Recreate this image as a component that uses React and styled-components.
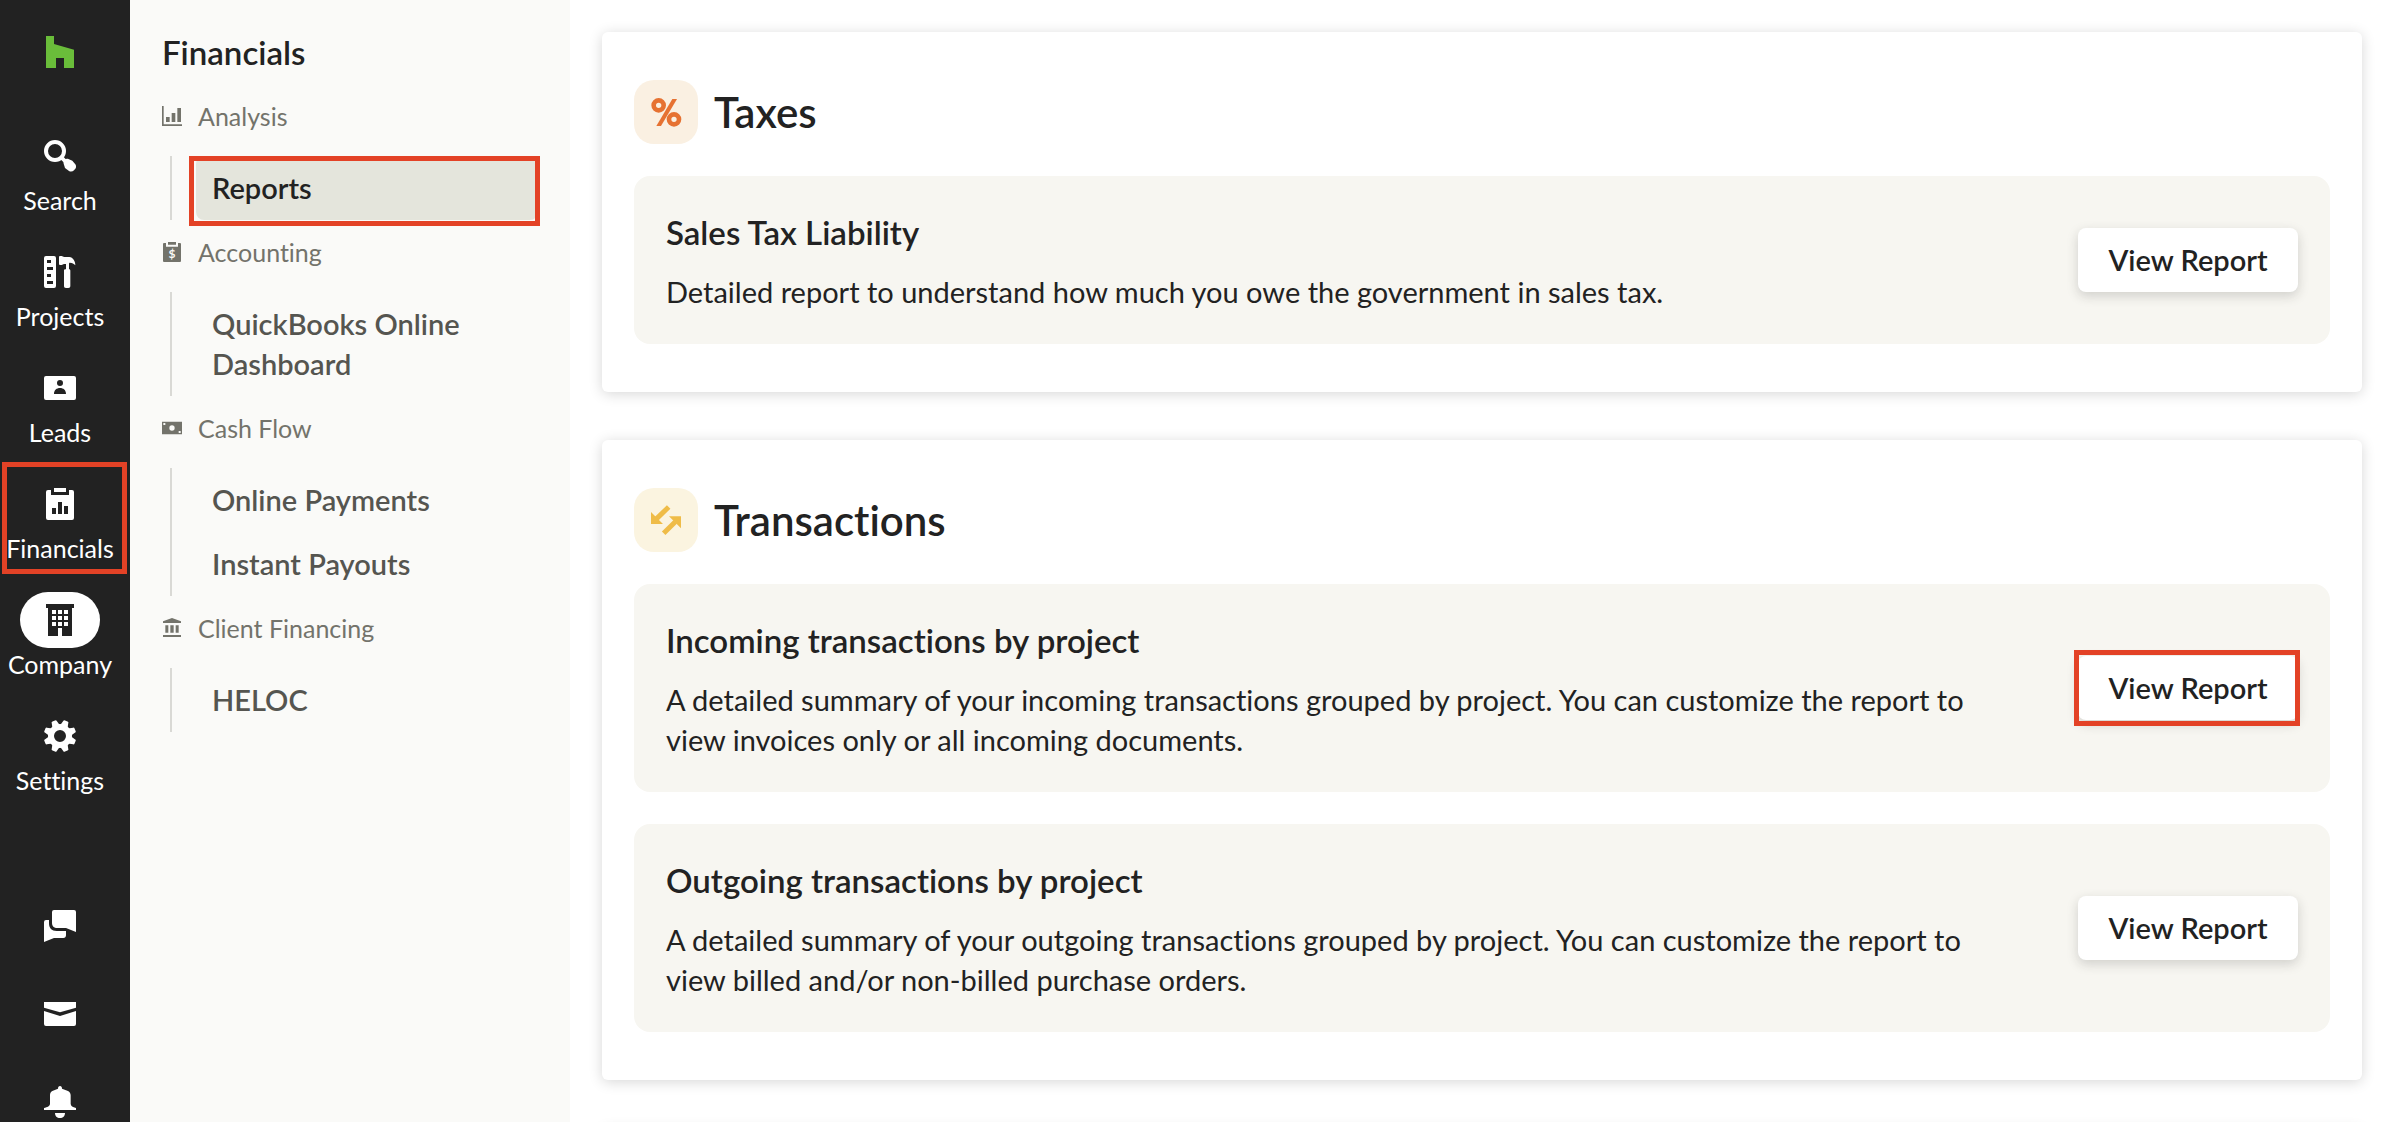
import React from "react";
import styled, { createGlobalStyle, css } from "styled-components";

const GlobalStyle = createGlobalStyle`
    * {
        box-sizing: border-box;
    }

    body {
        margin: 0;
        background: #fff;
        color: #222;
        font-family: "Lato", "Liberation Sans", sans-serif;
        font-variant-ligatures: none;
    }

    a {
        color: inherit;
        text-decoration: none;
    }
`;

const highlight = css`
    position: relative;

    &::after {
        content: "";
        position: absolute;
        border: 5px solid #e34226;
        pointer-events: none;
    }
`;

const Page = styled.div`
    display: flex;
    height: 100vh;
    overflow: hidden;
`;

const Rail = styled.nav`
    display: flex;
    flex-direction: column;
    align-items: center;
    flex: 0 0 130px;
    padding-right: 10px;
    background: #222;
    color: #fff;
    overflow: hidden;
`;

const Logo = styled.a`
    display: flex;
    padding: 36px 0 60px;
`;

const RailList = styled.div`
    display: flex;
    flex-direction: column;
    gap: 28px;
    width: 100%;
    margin-bottom: 86px;
`;

const RailItem = styled.a`
    display: flex;
    flex-direction: column;
    align-items: center;
    font-size: 25px;
    line-height: 32px;
    white-space: nowrap;

    ${(props) => props.$marked && css`
        ${highlight}

        &::after {
            inset: -14px -7px -10px 2px;
        }
    `}
`;

const Pill = styled.span`
    display: flex;
    align-items: center;
    justify-content: center;
    width: 80px;
    height: 56px;
    border-radius: 28px;
    background: ${(props) => (props.$active ? "#fff" : "transparent")};
    color: ${(props) => (props.$active ? "#222" : "#fff")};
`;

const RailAction = styled.button`
    display: flex;
    align-items: center;
    justify-content: center;
    flex: 0 0 88px;
    width: 88px;
    padding: 0;
    border: 0;
    background: none;
    color: #fff;
`;

const Panel = styled.aside`
    flex: 0 0 440px;
    padding: 28px 32px;
    background: #fafaf8;
`;

const PanelTitle = styled.h2`
    margin: 0 0 8px;
    font-size: 33px;
    font-weight: 600;
    line-height: 48px;
`;

const GroupTitle = styled.h3`
    display: flex;
    align-items: center;
    gap: 16px;
    margin: 0;
    padding: 16px 0 24px;
    color: #73736b;
    font-size: 25px;
    font-weight: 400;
    line-height: 32px;
`;

const GroupItems = styled.div`
    margin-left: 8px;
    padding-left: 24px;
    border-left: 2px solid #d9d9d5;
`;

const GroupLink = styled.a`
    display: block;
    padding: 12px 16px;
    border-radius: 8px;
    color: #555550;
    font-size: 29px;
    font-weight: 600;
    line-height: 40px;

    ${(props) => props.$active && css`
        background: #e4e5dc;
        color: #222;
        ${highlight}

        &::after {
            inset: 0 -2px -6px -7px;
        }
    `}
`;

const Main = styled.main`
    display: flex;
    flex-direction: column;
    flex: 1;
    gap: 48px;
    min-width: 0;
    padding: 32px 30px 32px 32px;
`;

const Card = styled.section`
    display: flex;
    flex-direction: column;
    flex-shrink: 0;
    gap: 32px;
    padding: 48px 32px;
    border-radius: 6px;
    background: #fff;
    box-shadow: 0 2px 14px rgba(0, 0, 0, 0.16);
`;

const CardHeader = styled.header`
    display: flex;
    align-items: center;
    gap: 16px;
`;

const Tile = styled.span`
    display: flex;
    width: 64px;
    height: 64px;
    border-radius: 20px;
    background: ${(props) => props.$background};
    color: ${(props) => props.$color};
`;

const CardTitle = styled.h1`
    margin: 0;
    font-size: 42px;
    font-weight: 600;
    line-height: 56px;
`;

const Report = styled.article`
    display: flex;
    align-items: center;
    justify-content: space-between;
    gap: 96px;
    padding: 32px;
    border-radius: 16px;
    background: #f7f6f1;
`;

const ReportTitle = styled.h2`
    margin: 0 0 16px;
    font-size: 33px;
    font-weight: 600;
    line-height: 48px;
`;

const ReportText = styled.p`
    margin: 0;
    font-size: 29px;
    line-height: 40px;
`;

const ButtonWrap = styled.div`
    flex: 0 0 220px;

    ${(props) => props.$marked && css`
        ${highlight}

        &::after {
            inset: -6px -2px -6px -4px;
        }
    `}
`;

const ReportButton = styled.button`
    display: block;
    width: 100%;
    height: 64px;
    padding: 0;
    border: 0;
    border-radius: 8px;
    background: #fff;
    box-shadow: 0 4px 12px rgba(34, 34, 34, 0.18);
    color: #222;
    font-family: inherit;
    font-size: 29px;
    font-weight: 600;
    line-height: 40px;
`;

const Icon = ({ size = 32, box = 96, children }) => (
    <svg width={size} height={size} viewBox={`0 0 ${box} ${box}`} fill="currentColor" aria-hidden="true">
        {children}
    </svg>
);

const SearchIcon = () => (
    <Icon>
        <circle cx="33" cy="33" r="27" fill="none" stroke="currentColor" strokeWidth="12" />
        <path d="M52 52l12 12" stroke="currentColor" strokeWidth="11" />
        <path d="M62 59c4-3 8-3 13-1l10 4 9 11c3 5 3 9 0 13l-4 5c-4 4-10 5-15 2l-12-9-4-13c-1-5 0-9 3-12z" />
    </Icon>
);

const ProjectsIcon = () => (
    <Icon>
        <path fillRule="evenodd" d="M6 0h24a6 6 0 0 1 6 6v84a6 6 0 0 1-6 6H6a6 6 0 0 1-6-6V6a6 6 0 0 1 6-6zM9 12v9h12v-9zM9 33v9h18v-9zM9 54v9h12v-9zM9 75v9h18v-9z" />
        <path d="M48 0h5c3 0 4 3 8 3h15c11 1 18 12 18 25-5-5-9-8-16-8-3 0-3 2-3 5v15h1c2 0 3 2 3 4v46c0 4-2 6-6 6h-7c-4 0-6-2-6-6V44c0-2 1-4 4-4h2V24h-6c-3 0-4 3-7 3h-5c-2 0-3-1-3-3V3c0-2 1-3 3-3z" />
    </Icon>
);

const LeadsIcon = () => (
    <Icon>
        <path fillRule="evenodd" d="M6 12h84a6 6 0 0 1 6 6v60a6 6 0 0 1-6 6H6a6 6 0 0 1-6-6V18a6 6 0 0 1 6-6zM48 24a9 9 0 1 0 0 18a9 9 0 1 0 0-18zM30 66h36c0-12-8-18-18-18s-18 6-18 18z" />
    </Icon>
);

const FinancialsIcon = () => (
    <Icon>
        <path d="M30 0h36v12H30z" />
        <path fillRule="evenodd" d="M12 6h9v15h54V6h9a6 6 0 0 1 6 6v78a6 6 0 0 1-6 6H12a6 6 0 0 1-6-6V12a6 6 0 0 1 6-6zM24 60v18h12V60zM42 42v36h12V42zM60 54v24h12V54z" />
    </Icon>
);

const CompanyIcon = () => (
    <Icon>
        <path fillRule="evenodd" d="M6 0h84v12h-6v84H54V72H42v24H12V12H6zM24 18v12h12V18zM42 18v12h12V18zM60 18v12h12V18zM24 36v12h12V36zM42 36v12h12V36zM60 36v12h12V36zM24 54v12h12V54zM42 54v12h12V54zM60 54v12h12V54z" />
    </Icon>
);

const SettingsIcon = () => (
    <Icon>
        <circle cx="48" cy="48" r="27" fill="none" stroke="currentColor" strokeWidth="18" />
        {[0, 1, 2, 3, 4, 5, 6, 7].map((tooth) => (
            <path key={tooth} d="M36 18l4-16q0-3 4-3h8q4 0 4 3l4 16z" transform={`rotate(${22.5 + tooth * 45} 48 48)`} />
        ))}
    </Icon>
);

const ChatIcon = () => (
    <Icon>
        <path d="M30 0h60a6 6 0 0 1 6 6v60L66 54H40c-10 0-16-6-16-16V6a6 6 0 0 1 6-6z" />
        <path d="M6 30h9v10c0 15 8 23 23 23h28v13c0 5-3 8-8 8H30L0 96V36a6 6 0 0 1 6-6z" />
    </Icon>
);

const MailIcon = () => (
    <Icon>
        <path d="M0 12h96v17L48 43 0 29z" />
        <path d="M0 39l48 15 48-15v39a6 6 0 0 1-6 6H6a6 6 0 0 1-6-6z" />
    </Icon>
);

const BellIcon = () => (
    <Icon>
        <path d="M48 0c4 0 6 3 6 8l18 7c5 3 8 7 8 13v25c0 7 6 10 16 13v6H0v-6c10-3 18-6 18-13V28c0-6 2-10 7-13l17-7c0-5 2-8 6-8zM33 81h30c0 9-6 15-15 15s-15-6-15-15z" />
    </Icon>
);

const AnalysisIcon = () => (
    <Icon size={20} box={60}>
        <path d="M0 0h5v55h55v5H0zM12 33h11v15H12zM29 21h11v27H29zM46 6h11v42H46z" />
    </Icon>
);

const AccountingIcon = () => (
    <Icon size={20} box={60}>
        <path d="M18 0h24v8H18zM6 3h6v11h36V3h6q3 0 3 3v51q0 3-3 3H6q-3 0-3-3V6q0-3 3-3z" />
        <text x="30" y="49" fill="#fafaf8" fontSize="36" fontWeight="700" textAnchor="middle">$</text>
    </Icon>
);

const CashIcon = () => (
    <Icon size={20} box={60}>
        <path fillRule="evenodd" d="M0 11h60v38H0zM30 22a8 8 0 1 0 0 16a8 8 0 1 0 0-16zM4 15v6h6v-6zM50 39v6h6v-6z" />
    </Icon>
);

const BankIcon = () => (
    <Icon size={20} box={60}>
        <path d="M30 0l27 10v5H3v-5zM10 22h9v22h-9zM25 22h10v22H25zM41 22h9v22h-9zM3 51h54v6H3z" />
    </Icon>
);

const PercentIcon = () => (
    <Icon size={64} box={192}>
        <g fill="none" stroke="currentColor" strokeWidth="14">
            <circle cx="74" cy="76" r="15" />
            <circle cx="120" cy="118" r="15" />
        </g>
        <path d="M115 57h14L81 138H67z" />
    </Icon>
);

const TransferIcon = () => (
    <Icon size={64} box={192}>
        <path d="M104 57L68 92M89 136l35-35" stroke="currentColor" strokeWidth="15" />
        <path d="M51 72v36h36zM141 121V85h-36z" />
    </Icon>
);

const railItems = [
    { label: "Search", icon: SearchIcon },
    { label: "Projects", icon: ProjectsIcon },
    { label: "Leads", icon: LeadsIcon },
    { label: "Financials", icon: FinancialsIcon, marked: true },
    { label: "Company", icon: CompanyIcon, active: true },
    { label: "Settings", icon: SettingsIcon },
];

const railActions = [
    { label: "Messages", icon: ChatIcon },
    { label: "Mail", icon: MailIcon },
    { label: "Notifications", icon: BellIcon },
];

const groups = [
    { title: "Analysis", icon: AnalysisIcon, links: ["Reports"] },
    { title: "Accounting", icon: AccountingIcon, links: ["QuickBooks Online Dashboard"] },
    { title: "Cash Flow", icon: CashIcon, links: ["Online Payments", "Instant Payouts"] },
    { title: "Client Financing", icon: BankIcon, links: ["HELOC"] },
];

const sections = [
    {
        title: "Taxes",
        icon: PercentIcon,
        color: "#e67232",
        background: "#faf0e2",
        reports: [
            {
                title: "Sales Tax Liability",
                text: "Detailed report to understand how much you owe the government in sales tax.",
            },
        ],
    },
    {
        title: "Transactions",
        icon: TransferIcon,
        color: "#efbc48",
        background: "#fbf4e0",
        reports: [
            {
                title: "Incoming transactions by project",
                text: "A detailed summary of your incoming transactions grouped by project. You can customize the report to view invoices only or all incoming documents.",
                marked: true,
            },
            {
                title: "Outgoing transactions by project",
                text: "A detailed summary of your outgoing transactions grouped by project. You can customize the report to view billed and/or non-billed purchase orders.",
            },
        ],
    },
];

export default function App() {
    return (
        <Page>
            <GlobalStyle />
            <Rail>
                <Logo href="#" aria-label="Home">
                    <Icon>
                        <path fill="#6abd3a" d="M6 0h24v24l60 17v55H60V66H36v30H6z" />
                    </Icon>
                </Logo>
                <RailList>
                    {railItems.map(({ label, icon: ItemIcon, active, marked }) => (
                        <RailItem key={label} href="#" $marked={marked}>
                            <Pill $active={active}>
                                <ItemIcon />
                            </Pill>
                            {label}
                        </RailItem>
                    ))}
                </RailList>
                {railActions.map(({ label, icon: ActionIcon }) => (
                    <RailAction key={label} type="button" aria-label={label}>
                        <ActionIcon />
                    </RailAction>
                ))}
            </Rail>
            <Panel>
                <PanelTitle>Financials</PanelTitle>
                {groups.map(({ title, icon: GroupIcon, links }) => (
                    <div key={title}>
                        <GroupTitle>
                            <GroupIcon />
                            {title}
                        </GroupTitle>
                        <GroupItems>
                            {links.map((link) => (
                                <GroupLink key={link} href="#" $active={link === "Reports"}>
                                    {link}
                                </GroupLink>
                            ))}
                        </GroupItems>
                    </div>
                ))}
            </Panel>
            <Main>
                {sections.map(({ title, icon: SectionIcon, color, background, reports }) => (
                    <Card key={title}>
                        <CardHeader>
                            <Tile $color={color} $background={background}>
                                <SectionIcon />
                            </Tile>
                            <CardTitle>{title}</CardTitle>
                        </CardHeader>
                        {reports.map((report) => (
                            <Report key={report.title}>
                                <div>
                                    <ReportTitle>{report.title}</ReportTitle>
                                    <ReportText>{report.text}</ReportText>
                                </div>
                                <ButtonWrap $marked={report.marked}>
                                    <ReportButton type="button">View Report</ReportButton>
                                </ButtonWrap>
                            </Report>
                        ))}
                    </Card>
                ))}
                <Card />
            </Main>
        </Page>
    );
}
